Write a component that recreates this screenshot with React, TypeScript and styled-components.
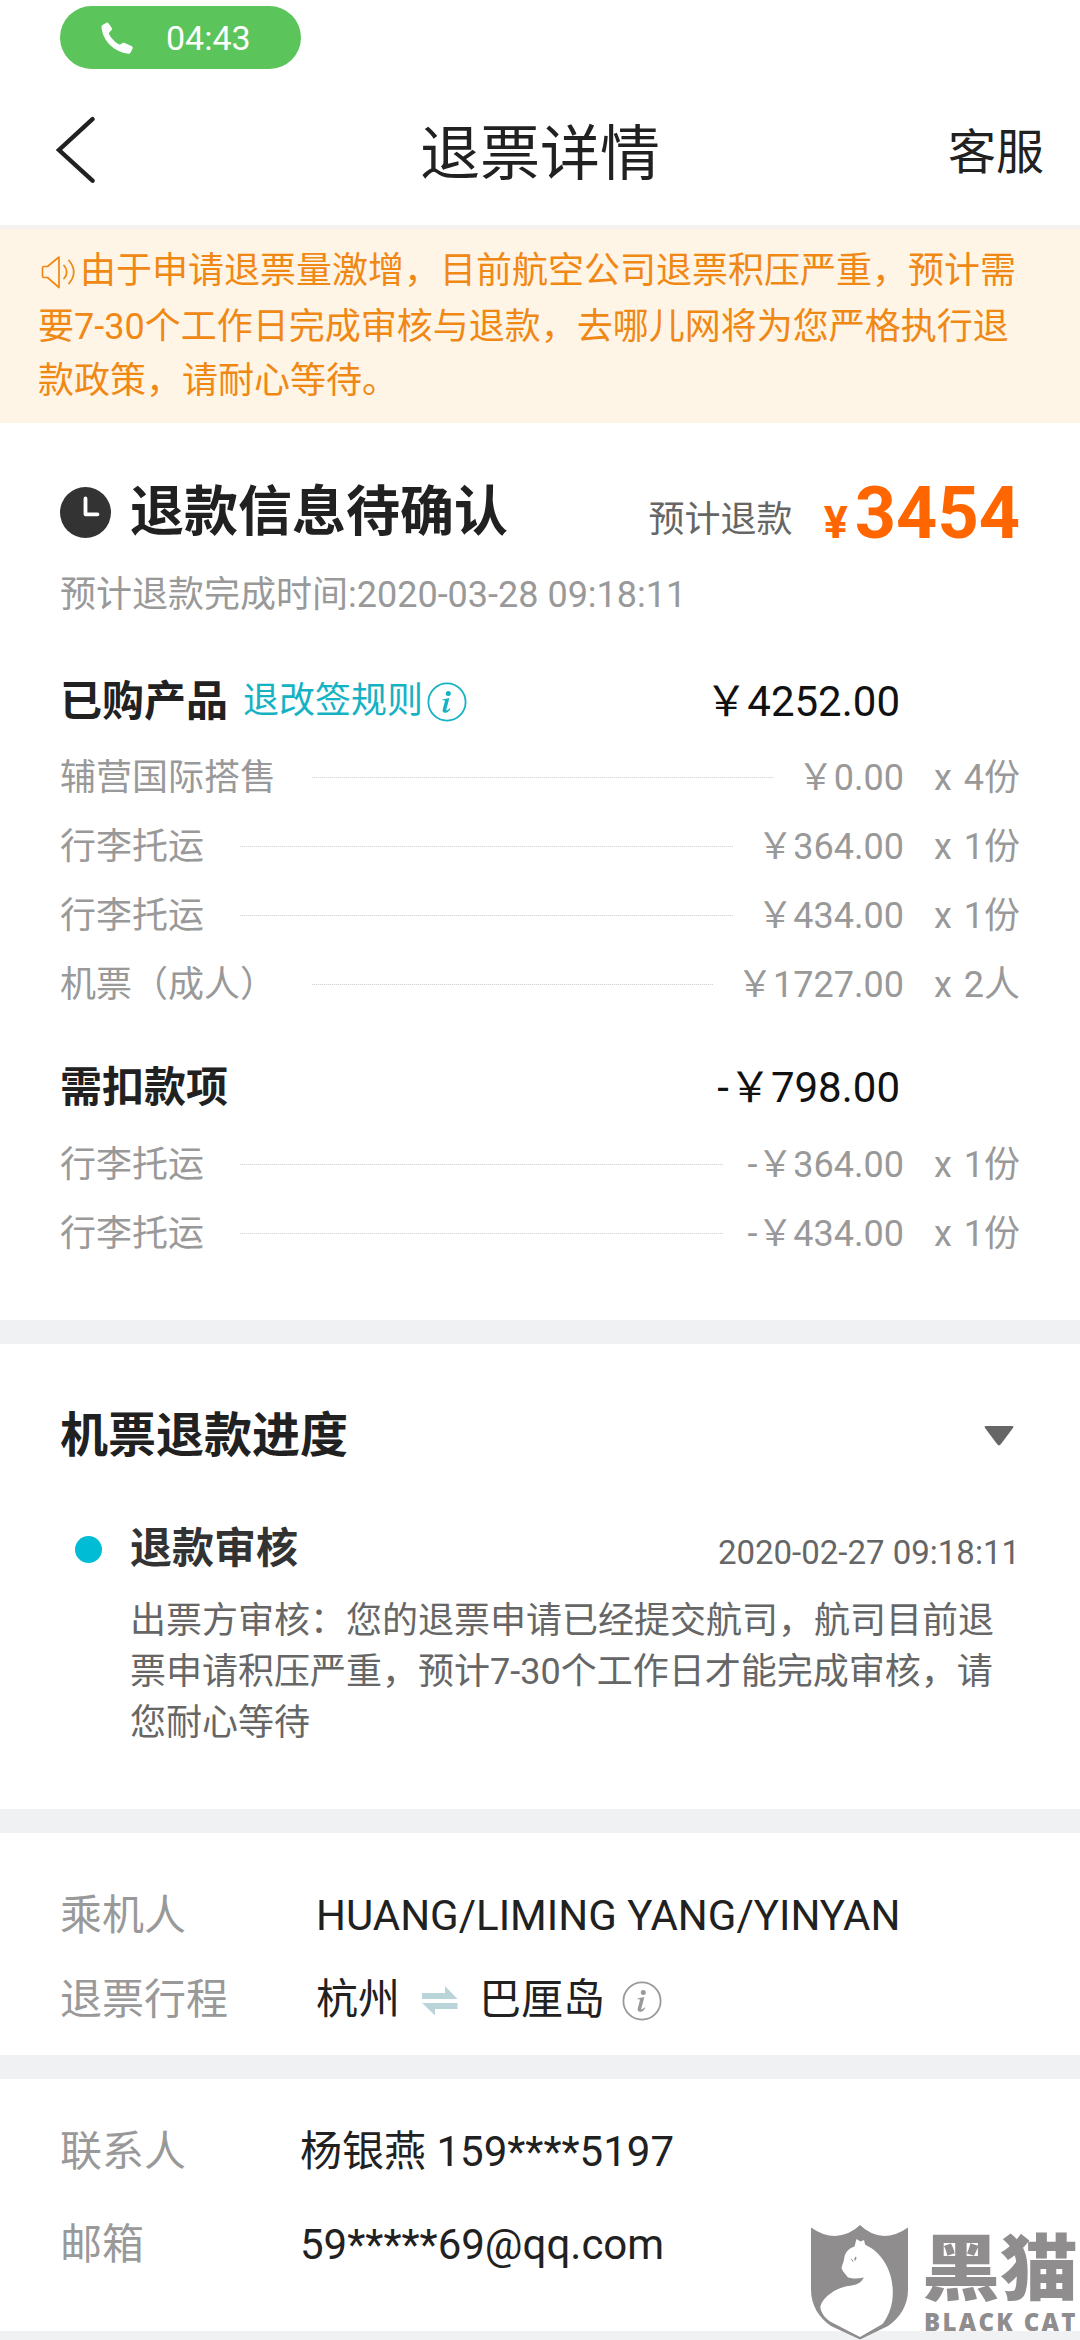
import React from "react";
import styled, { createGlobalStyle } from "styled-components";

const GlobalStyle = createGlobalStyle`
  html, body { margin: 0; padding: 0; background: #fff; }
  body {
    font-family: Roboto, "Noto Sans CJK SC", sans-serif;
    color: #212121;
    overflow: hidden;
  }
  * { box-sizing: border-box; }
  svg { display: block; flex: none; }
`;

const Screen = styled.main`
  position: relative;
  width: 1080px;
  height: 2340px;
  overflow: hidden;
  display: flex;
  flex-direction: column;
  background: #fff;
  white-space: nowrap;

  & > * { flex: none; }
`;

const StatusBar = styled.div`
  height: 75px;
  padding: 6px 60px 0;
`;

const CallPill = styled.div`
  width: 241px;
  height: 63px;
  border-radius: 32px;
  background: #5bc45b;
  display: flex;
  align-items: center;
  padding-left: 41px;
  gap: 33px;
  color: #fff;
  font-size: 34px;
  line-height: 40px;
`;

const Header = styled.header`
  height: 150px;
  padding: 0 36px 0 56px;
  display: grid;
  grid-template-columns: 170px 1fr 190px;
  align-items: center;
`;

const HeaderTitle = styled.h1`
  margin: 10px 0 0;
  font-size: 60px;
  font-weight: 400;
  line-height: 72px;
  text-align: center;
`;

const HeaderAction = styled.span`
  margin-top: 6px;
  font-size: 48px;
  line-height: 60px;
  text-align: right;
`;

const Notice = styled.section`
  height: 198px;
  padding: 12px 38px 0;
  border-top: 4px solid #f4f2ee;
  background: #fff5e6;
  color: #ef8815;
  font-size: 36px;
`;

const NoticeLine = styled.div<{ $first?: boolean }>`
  display: flex;
  align-items: center;
  gap: 3px;
  height: ${(p) => (p.$first ? 59 : 54)}px;
  line-height: 54px;
`;

const Section = styled.section<{ $height: number; $top: number }>`
  height: ${(p) => p.$height}px;
  padding: ${(p) => p.$top}px 60px 0;
`;

const Divider = styled.div`
  height: 24px;
  background: #f0f1f2;
`;

const Row = styled.div<{ $height: number; $mt?: number }>`
  display: flex;
  align-items: center;
  height: ${(p) => p.$height}px;
  margin-top: ${(p) => p.$mt ?? 0}px;
`;

const StatusTitle = styled.h2`
  margin: 0 auto 0 19px;
  font-size: 54px;
  line-height: 60px;
  font-weight: 700;
`;

const EstimateLabel = styled.span`
  margin: 15px 31px 0 0;
  font-size: 36px;
  line-height: 42px;
  color: #666;
`;

const Amount = styled.strong`
  display: flex;
  align-items: baseline;
  gap: 7px;
  margin-top: 12px;
  font-size: 72px;
  line-height: 72px;
  font-weight: 700;
  color: #ff6600;
`;

const Currency = styled.span`
  font-size: 45px;
`;

const Eta = styled.div`
  margin-top: 25px;
  font-size: 36px;
  line-height: 55px;
  color: #999;
`;

const GroupTitle = styled.h3`
  margin: 0;
  font-size: 42px;
  line-height: 60px;
  font-weight: 700;
`;

const RuleLink = styled.a`
  display: flex;
  align-items: center;
  gap: 4px;
  margin-left: 15px;
  font-size: 36px;
  line-height: 42px;
  color: #14b2c3;

  & > span { margin-bottom: 3px; }
`;

const GroupTotal = styled.span`
  margin: 0 120px 1px auto;
  font-size: 42px;
  line-height: 60px;
  color: #111;
`;

const ItemGroup = styled.div<{ $mt: number }>`
  margin-top: ${(p) => p.$mt}px;
`;

const Item = styled.div`
  display: flex;
  align-items: center;
  height: 69px;
  font-size: 36px;
  line-height: 69px;
  color: #999;
`;

const Leader = styled.i`
  flex: 1;
  height: 1px;
  margin: 0 24px 2px 36px;
  background: repeating-linear-gradient(90deg, #d4d4d4 0 1px, #f3f3f3 1px 2px);
`;

const Quantity = styled.span`
  width: 116px;
  display: flex;
  justify-content: flex-end;
  gap: 12px;
`;

const SectionTitle = styled.h2`
  margin: 0 auto 0 0;
  font-size: 48px;
  line-height: 60px;
  font-weight: 700;
`;

const StepDot = styled.i`
  width: 27px;
  height: 27px;
  margin: 0 28px 0 15px;
  border-radius: 50%;
  background: #00bcd4;
`;

const StepTitle = styled.h3`
  margin: 0 auto 0 0;
  font-size: 42px;
  line-height: 60px;
  font-weight: 700;
  color: #333;
`;

const StepTime = styled.time`
  margin-top: 8px;
  font-size: 33px;
  line-height: 50px;
  color: #666;
`;

const StepText = styled.p`
  margin: 17px 0 0 70px;
  font-size: 36px;
  line-height: 51px;
  color: #666;
`;

const Field = styled.div<{ $height: number; $label: number }>`
  display: grid;
  grid-template-columns: ${(p) => p.$label}px 1fr;
  align-items: center;
  height: ${(p) => p.$height}px;
  font-size: 42px;
  line-height: 60px;
`;

const FieldLabel = styled.span`
  color: #999;
`;

const Route = styled.span`
  display: flex;
  align-items: center;
`;

const Arrows = styled.svg`
  margin: 2px 21px 0 22px;
`;

const RouteInfo = styled.span`
  margin: 2px 0 0 17px;
`;

const Watermark = styled.div`
  position: absolute;
  left: 810px;
  top: 2224px;
  display: flex;
  color: #8f8d8e;
`;

const WatermarkText = styled.div`
  margin: 0 0 0 14px;
  display: flex;
  flex-direction: column;
`;

const WatermarkName = styled.span`
  font-family: "Noto Sans CJK SC", sans-serif;
  font-size: 78px;
  line-height: 78px;
  font-weight: 900;
  transform: scaleY(0.92);
`;

const WatermarkLatin = styled.span`
  margin: 8px 0 0 2px;
  font-family: "Open Sans", sans-serif;
  font-size: 24px;
  line-height: 24px;
  font-weight: 800;
  letter-spacing: 2.3px;
`;

const InfoIcon = ({ color }: { color: string }) => (
  <svg width="40" height="40" viewBox="0 0 40 40" fill="none">
    <circle cx="20" cy="20" r="18.6" stroke={color} strokeWidth="1.8" />
    <circle cx="21.3" cy="11.6" r="2.5" fill={color} />
    <path
      d="M15.5 17.4c2.2-.5 4.6-1.1 6.9-1.500l-3 11.3c-.3 1.2.1 1.4.8 1.1.8-.3 1.5-1.1 2.2-2l.9.6c-1.5 2.5-3.4 3.9-5.3 3.9-2 0-2.8-1.3-2.2-3.5l2-7.5c.3-1.1 0-1.500-1-1.500h-1.5z"
      fill={color}
    />
  </svg>
);

const purchased = [
  { name: "辅营国际搭售", price: "￥0.00", count: "4份" },
  { name: "行李托运", price: "￥364.00", count: "1份" },
  { name: "行李托运", price: "￥434.00", count: "1份" },
  { name: "机票（成人）", price: "￥1727.00", count: "2人" },
];

const deducted = [
  { name: "行李托运", price: "-￥364.00", count: "1份" },
  { name: "行李托运", price: "-￥434.00", count: "1份" },
];

const ItemList = ({ items, top }: { items: typeof purchased; top: number }) => (
  <ItemGroup $mt={top}>
    {items.map((item, i) => (
      <Item key={i}>
        <span>{item.name}</span>
        <Leader />
        <span>{item.price}</span>
        <Quantity>
          <span>x</span>
          <span>{item.count}</span>
        </Quantity>
      </Item>
    ))}
  </ItemGroup>
);

export default function App() {
  return (
    <Screen>
      <GlobalStyle />
      <StatusBar>
        <CallPill>
          <svg width="32" height="32" viewBox="0 0 32 32" fill="#fff">
            <path d="M1.200 3.200 5.300.7c.8-.5 1.700-.3 2.200.5l3.200 4.700c.5.800.4 1.500-.2 2.100L8.300 10.500c-.5.6-.5 1.200-.1 1.900 2.400 4.200 5.600 7.400 9.600 9.900.7.400 1.300.3 1.900-.1l1.800-1.100c.8-.5 1.500-.5 2.300-.1l7 3.300c.9.500 1.200 1.200.8 2.100l-2 4.100c-.4.900-1.100 1.300-2.100 1.200C13 30 1.600 18.600.5 5.200c-.1-.9.100-1.500.7-2z" />
          </svg>
          <span>04:43</span>
        </CallPill>
      </StatusBar>

      <Header>
        <svg width="40" height="68" viewBox="0 0 40 68" fill="none">
          <path d="M36.500 3.200 3 34l33.500 30.700" stroke="#212121" strokeWidth="4.400" strokeLinecap="round" />
        </svg>
        <HeaderTitle>退票详情</HeaderTitle>
        <HeaderAction>客服</HeaderAction>
      </Header>

      <Notice>
        <NoticeLine $first>
          <svg width="39" height="36" viewBox="0 0 39 36" fill="none" stroke="#ef8815" strokeWidth="1.700" strokeLinecap="round" strokeLinejoin="round">
            <path d="M9.500 13.500H6Q4.500 13.500 4.500 15v8q0 1.500 1.500 1.500h3.500L21 34.500V4z" />
            <path d="M26 12.500q5.500 6.300 0 13M31 7.500q9.500 11.300 0 23" />
          </svg>
          <span>由于申请退票量激增，目前航空公司退票积压严重，预计需</span>
        </NoticeLine>
        <NoticeLine>要7-30个工作日完成审核与退款，去哪儿网将为您严格执行退</NoticeLine>
        <NoticeLine>款政策，请耐心等待。</NoticeLine>
      </Notice>

      <Section $height={897} $top={59}>
        <Row $height={61}>
          <svg width="51" height="51" viewBox="0 0 51 51" fill="none">
            <circle cx="25.500" cy="25.500" r="25.500" fill="#333" />
            <path d="M25.500 11.500v15.800h12" stroke="#fff" strokeWidth="3.800" strokeLinecap="round" strokeLinejoin="round" />
          </svg>
          <StatusTitle>退款信息待确认</StatusTitle>
          <EstimateLabel>预计退款</EstimateLabel>
          <Amount>
            <Currency>¥</Currency>
            <span>3454</span>
          </Amount>
        </Row>
        <Eta>预计退款完成时间:2020-03-28 09:18:11</Eta>

        <Row $height={60} $mt={49}>
          <GroupTitle>已购产品</GroupTitle>
          <RuleLink>
            <span>退改签规则</span>
            <InfoIcon color="#14b2c3" />
          </RuleLink>
          <GroupTotal>￥4252.00</GroupTotal>
        </Row>
        <ItemList items={purchased} top={12} />

        <Row $height={60} $mt={38}>
          <GroupTitle>需扣款项</GroupTitle>
          <GroupTotal>-￥798.00</GroupTotal>
        </Row>
        <ItemList items={deducted} top={13} />
      </Section>

      <Divider />

      <Section $height={465} $top={62}>
        <Row $height={60}>
          <SectionTitle>机票退款进度</SectionTitle>
          <svg width="36" height="20" viewBox="0 0 36 20">
            <path d="M2 0h26q2.500 0 .8 2.200L16.800 18.300q-1.800 2.200-3.600 0L1.200 2.200Q-.5 0 2 0z" fill="#666" />
          </svg>
        </Row>
        <Row $height={60} $mt={53}>
          <StepDot />
          <StepTitle>退款审核</StepTitle>
          <StepTime>2020-02-27 09:18:11</StepTime>
        </Row>
        <StepText>
          出票方审核：您的退票申请已经提交航司，航司目前退
          <br />
          票申请积压严重，预计7-30个工作日才能完成审核，请
          <br />
          您耐心等待
        </StepText>
      </Section>

      <Divider />

      <Section $height={222} $top={41}>
        <Field $height={84} $label={256}>
          <FieldLabel>乘机人</FieldLabel>
          <span>HUANG/LIMING YANG/YINYAN</span>
        </Field>
        <Field $height={84} $label={256}>
          <FieldLabel>退票行程</FieldLabel>
          <Route>
            <span>杭州</span>
            <Arrows width="36" height="30" viewBox="0 0 36 30" fill="#bad5da">
              <path d="M0 7h23V0l12.500 13H0zM35.500 17v6H13v6.500L0 17z" />
            </Arrows>
            <span>巴厘岛</span>
            <RouteInfo>
              <InfoIcon color="#999" />
            </RouteInfo>
          </Route>
        </Field>
      </Section>

      <Divider />

      <Section $height={252} $top={26}>
        <Field $height={93} $label={240}>
          <FieldLabel>联系人</FieldLabel>
          <span>杨银燕 159****5197</span>
        </Field>
        <Field $height={93} $label={240}>
          <FieldLabel>邮箱</FieldLabel>
          <span>59*****69@qq.com</span>
        </Field>
      </Section>

      <Divider />

      <Watermark>
        <svg width="98" height="116" viewBox="0 0 98 116">
          <path
            d="M1 3.500Q13 12 25 12 40 11 50 1q10 10 24 11 12 0 24-8.500V66c0 15-8 28-20 36L50 115.500 21 102C9 94 1 81 1 66z"
            fill="#8f8d8e"
          />
          <path
            d="M44.500 22.500 46.500 15l4 2.500L54 16l1.200 4.800C71 28 82 45 82.800 66c.4 13-3 25-10.300 34L50 113 20 97.500C15 94 11 89 10.300 83 13 72 27 64 38 62c7-1 12-1.500 16-8.500-7 1.500-13 1.300-16.500-.5-2-3-5-5.500-6-9C32 41 34 38 34.300 33.500c1-5.500 5-9.500 10.200-11z"
            fill="#fff"
          />
          <path d="m40.500 34 1.800 3.500 1.200.500-1-2zM46 32.500c-1.500.8-1.800 2.500-1.500 4.500 1.800-1 2.500-3 1.500-4.500z" fill="#8f8d8e" />
        </svg>
        <WatermarkText>
          <WatermarkName>黑猫</WatermarkName>
          <WatermarkLatin>BLACK CAT</WatermarkLatin>
        </WatermarkText>
      </Watermark>
    </Screen>
  );
}
